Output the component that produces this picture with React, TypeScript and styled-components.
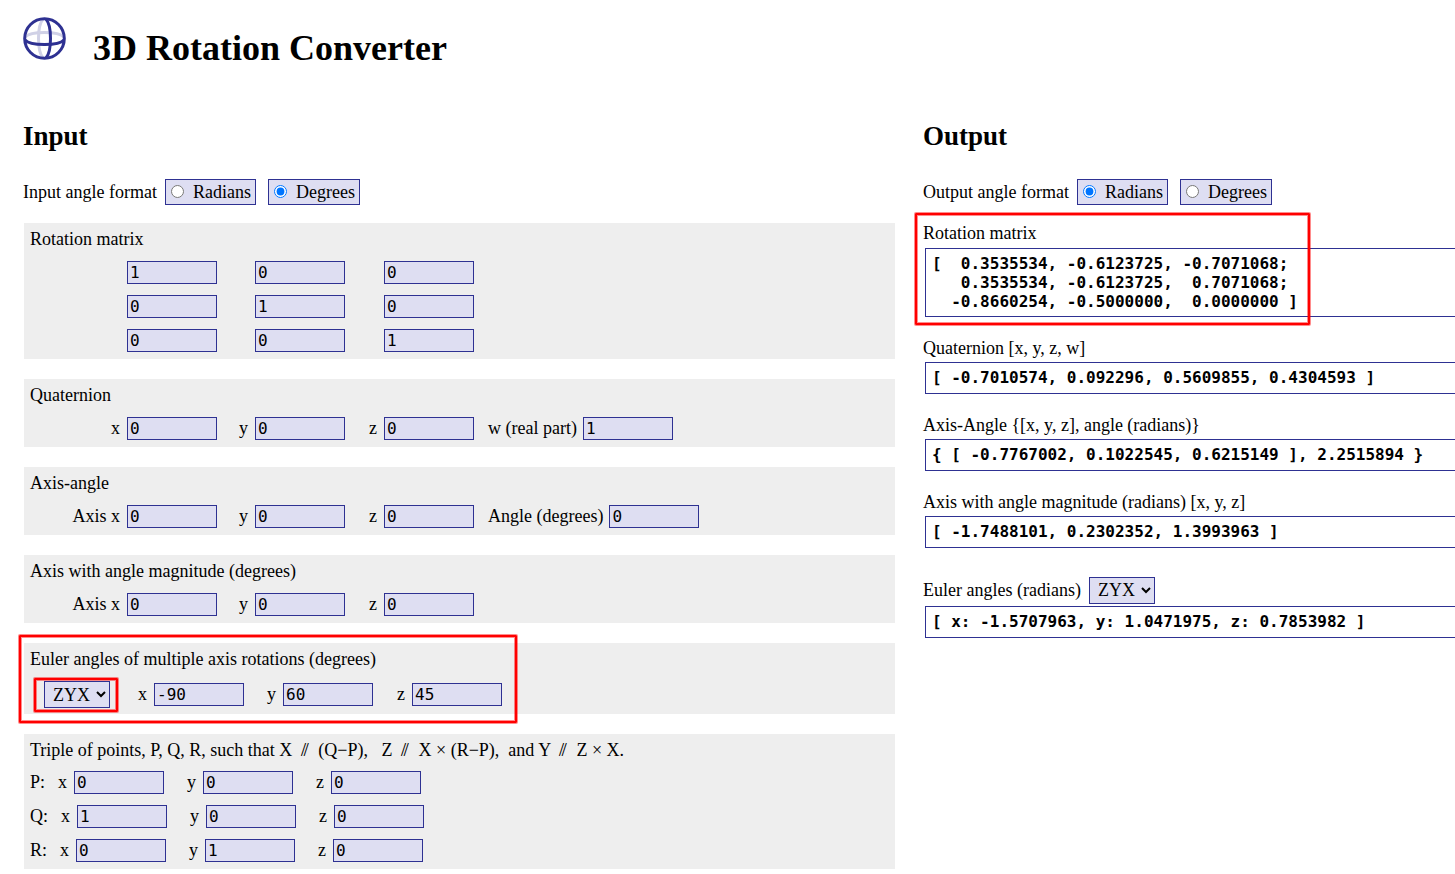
import React, { useState } from "react";
import styled, { createGlobalStyle } from "styled-components";

const ink = "#2e3192";
const fill = "#dedef2";

const GlobalStyle = createGlobalStyle`
  * { box-sizing: border-box; }
  body {
    margin: 0;
    background: #fff;
    color: #000;
    font: 18px/20px "Liberation Serif", "DejaVu Sans", serif;
    overflow-x: hidden;
  }
`;

const Page = styled.div`
  padding: 17px 0 0 23px;
`;

const Header = styled.header`
  display: flex;
  align-items: flex-start;
  gap: 27px;
`;

const Title = styled.h1`
  margin: 10px 0 0;
  font-size: 36px;
  line-height: 42px;
`;

const Columns = styled.main`
  display: grid;
  grid-template-columns: minmax(0, 59fr) minmax(0, 36fr);
  column-gap: 28px;
  margin-top: 51px;
`;

const Column = styled.div`
  min-width: 0;
`;

const Heading = styled.h2`
  margin: 0 0 27px;
  font-size: 27px;
  line-height: 32px;
`;

const FormatRow = styled.div`
  display: flex;
  align-items: center;
  height: 26px;
`;

const Choice = styled.label`
  display: flex;
  align-items: center;
  height: 26px;
  margin-left: 8px;
  padding: 0 4px 0 5px;
  border: 1px solid ${ink};
  background: ${fill};
  & + & {
    margin-left: 12px;
  }
`;

const Radio = styled.input`
  width: 13px;
  height: 13px;
  margin: 0 9px 2px 0;
`;

const Section = styled.section`
  position: relative;
  margin: 0 0 20px 1px;
  padding: 0 6px 1px;
  background: #eee;
`;

const Sections = styled.div`
  margin-top: 18px;
`;

const SectionTitle = styled.div<{ $compact?: boolean }>`
  height: ${(p) => (p.$compact ? 32 : 33)}px;
  line-height: 32px;
  white-space: pre;
`;

const Row = styled.div<{ $tall?: boolean }>`
  display: flex;
  align-items: center;
  height: ${(p) => (p.$tall ? 37 : 33)}px;
  margin-bottom: ${(p) => (p.$tall ? 0 : 1)}px;
`;

const Field = styled.label`
  display: flex;
  align-items: center;
`;

type Kind = "lead" | "near" | "inner" | "tail" | "tight";

const captionWidth: Record<Kind, string> = {
  lead: "97px",
  near: "38px",
  inner: "39px",
  tail: "auto",
  tight: "auto",
};

const Caption = styled.span<{ $kind: Kind }>`
  width: ${(p) => captionWidth[p.$kind]};
  margin-left: ${(p) => (p.$kind === "tail" ? 14 : 0)}px;
  padding: 0 ${(p) => (p.$kind === "tail" ? 6 : 7)}px 1px 0;
  text-align: right;
  white-space: nowrap;
`;

const NumberBox = styled.input`
  width: 90px;
  height: 23px;
  padding: 0 2px;
  border: 1px solid ${ink};
  border-radius: 0;
  background: ${fill};
  color: #000;
  font: 16px "DejaVu Sans Mono", monospace;
`;

const PointName = styled.span`
  margin-right: 13px;
  padding-bottom: 1px;
`;

const OrderSelect = styled.select`
  width: 66px;
  height: 27px;
  padding: 0 0 0 4px;
  border: 1px solid ${ink};
  border-radius: 0;
  background: ${fill};
  color: #000;
  font: 18px "Liberation Serif", serif;
`;

const EulerSelect = styled.span`
  position: relative;
  display: inline-flex;
  margin: 0 28px 0 14px;
`;

const Highlight = styled.span<{ $inset: string; $width?: number }>`
  position: absolute;
  z-index: 1;
  inset: ${(p) => p.$inset};
  width: ${(p) => (p.$width ? `${p.$width}px` : "auto")};
  border: 2px solid #f00;
  border-radius: 1px;
  box-shadow: 0 0 0 1px rgba(255, 0, 0, 0.45), inset 0 0 0 1px rgba(255, 0, 0, 0.45);
  pointer-events: none;
`;

const Results = styled.div`
  margin-top: 18px;
`;

const Result = styled.section<{ $spaced?: boolean }>`
  position: relative;
  margin-top: ${(p) => (p.$spaced ? 28 : 21)}px;
  &:first-child {
    margin-top: 0;
  }
`;

const ResultTitle = styled.div<{ $height?: number }>`
  height: ${(p) => p.$height ?? 24}px;
`;

const ResultSelectTitle = styled.div`
  display: flex;
  align-items: center;
  gap: 8px;
  height: 28px;
  margin-bottom: 2px;
`;

const ResultBox = styled.pre`
  margin: 0 0 0 2px;
  padding: 5px 6px;
  border: 1px solid ${ink};
  border-right: 0;
  min-height: 32px;
  font: bold 16px/19px "DejaVu Sans Mono", monospace;
`;

function Logo() {
  return (
    <svg width="43" height="43" viewBox="0 0 43 43" fill="none" stroke={ink} strokeWidth="3" aria-hidden="true">
      <g opacity="0.22">
        <path d="M2 20C8 14 35 14 41 20" />
        <path d="M20 2C14 9 14 34 20 41" />
      </g>
      <path d="M2 23C7 29 36 29 41 23" />
      <path d="M23 2C29 9 29 34 23 41" />
      <circle cx="21.5" cy="21.5" r="19.8" />
    </svg>
  );
}

function AngleFormat({ label, name, initial }: { label: string; name: string; initial: string }) {
  const [value, setValue] = useState(initial);
  return (
    <FormatRow role="radiogroup" aria-label={label}>
      <span>{label}</span>
      {["Radians", "Degrees"].map((unit) => (
        <Choice key={unit}>
          <Radio type="radio" name={name} checked={value === unit} onChange={() => setValue(unit)} />
          {unit}
        </Choice>
      ))}
    </FormatRow>
  );
}

function Num({ label = "", kind, value, name }: { label?: string; kind: Kind; value: string; name?: string }) {
  return (
    <Field>
      <Caption $kind={kind}>{label}</Caption>
      <NumberBox defaultValue={value} aria-label={name} />
    </Field>
  );
}

function Order({ name }: { name: string }) {
  return (
    <OrderSelect defaultValue="ZYX" aria-label={name}>
      {["XYZ", "XZY", "YXZ", "YZX", "ZXY", "ZYX"].map((o) => (
        <option key={o}>{o}</option>
      ))}
    </OrderSelect>
  );
}

const matrix = [
  ["1", "0", "0"],
  ["0", "1", "0"],
  ["0", "0", "1"],
];
const matrixKinds: Kind[] = ["lead", "near", "inner"];

const points = [
  { name: "P", values: ["0", "0", "0"] },
  { name: "Q", values: ["1", "0", "0"] },
  { name: "R", values: ["0", "1", "0"] },
];
const pointKinds: Kind[] = ["tight", "inner", "near"];

const parallel = "\u00a0\u2AFD\u00a0";
const pointsTitle =
  `Triple of points, P, Q, R, such that X ${parallel} (Q\u2212P),\u00a0\u00a0 Z ${parallel} X \u00d7 (R\u2212P),\u00a0 and Y ${parallel} Z \u00d7 X.`;

const matrixText = `[  0.3535534, -0.6123725, -0.7071068;
   0.3535534, -0.6123725,  0.7071068;
  -0.8660254, -0.5000000,  0.0000000 ]`;

const vectors = [
  { title: "Quaternion [x, y, z, w]", text: "[ -0.7010574, 0.092296, 0.5609855, 0.4304593 ]" },
  { title: "Axis-Angle {[x, y, z], angle (radians)}", text: "{ [ -0.7767002, 0.1022545, 0.6215149 ], 2.2515894 }" },
  { title: "Axis with angle magnitude (radians) [x, y, z]", text: "[ -1.7488101, 0.2302352, 1.3993963 ]" },
];

export default function App() {
  return (
    <Page>
      <GlobalStyle />
      <Header>
        <Logo />
        <Title>3D Rotation Converter</Title>
      </Header>
      <Columns>
        <Column>
          <Heading>Input</Heading>
          <AngleFormat label="Input angle format" name="input-format" initial="Degrees" />
          <Sections>
            <Section>
              <SectionTitle>Rotation matrix</SectionTitle>
              {matrix.map((row, r) => (
                <Row key={r}>
                  {row.map((v, c) => (
                    <Num key={c} kind={matrixKinds[c]} value={v} name={`Row ${r + 1}, column ${c + 1}`} />
                  ))}
                </Row>
              ))}
            </Section>
            <Section>
              <SectionTitle>Quaternion</SectionTitle>
              <Row>
                <Num label="x" kind="lead" value="0" />
                <Num label="y" kind="near" value="0" />
                <Num label="z" kind="inner" value="0" />
                <Num label="w (real part)" kind="tail" value="1" />
              </Row>
            </Section>
            <Section>
              <SectionTitle>Axis-angle</SectionTitle>
              <Row>
                <Num label="Axis x" kind="lead" value="0" />
                <Num label="y" kind="near" value="0" />
                <Num label="z" kind="inner" value="0" />
                <Num label="Angle (degrees)" kind="tail" value="0" />
              </Row>
            </Section>
            <Section>
              <SectionTitle>Axis with angle magnitude (degrees)</SectionTitle>
              <Row>
                <Num label="Axis x" kind="lead" value="0" />
                <Num label="y" kind="near" value="0" />
                <Num label="z" kind="inner" value="0" />
              </Row>
            </Section>
            <Section>
              <SectionTitle>Euler angles of multiple axis rotations (degrees)</SectionTitle>
              <Row $tall>
                <EulerSelect>
                  <Order name="Input rotation order" />
                  <Highlight $inset="-3px -8px -4px -10px" />
                </EulerSelect>
                <Num label="x" kind="tight" value="-90" />
                <Num label="y" kind="inner" value="60" />
                <Num label="z" kind="inner" value="45" />
              </Row>
              <Highlight $inset="-8px auto -9px -5px" $width={498} />
            </Section>
            <Section>
              <SectionTitle $compact>{pointsTitle}</SectionTitle>
              {points.map((p) => (
                <Row key={p.name}>
                  <PointName>{p.name}:</PointName>
                  {p.values.map((v, i) => (
                    <Num key={i} label={"xyz"[i]} kind={pointKinds[i]} value={v} />
                  ))}
                </Row>
              ))}
            </Section>
          </Sections>
        </Column>
        <Column>
          <Heading>Output</Heading>
          <AngleFormat label="Output angle format" name="output-format" initial="Radians" />
          <Results>
            <Result>
              <ResultTitle $height={25}>Rotation matrix</ResultTitle>
              <ResultBox>{matrixText}</ResultBox>
              <Highlight $inset="-10px auto -8px -8px" $width={395} />
            </Result>
            {vectors.map((v) => (
              <Result key={v.title}>
                <ResultTitle>{v.title}</ResultTitle>
                <ResultBox>{v.text}</ResultBox>
              </Result>
            ))}
            <Result $spaced>
              <ResultSelectTitle>
                Euler angles (radians)
                <Order name="Output rotation order" />
              </ResultSelectTitle>
              <ResultBox>[ x: -1.5707963, y: 1.0471975, z: 0.7853982 ]</ResultBox>
            </Result>
          </Results>
        </Column>
      </Columns>
    </Page>
  );
}
